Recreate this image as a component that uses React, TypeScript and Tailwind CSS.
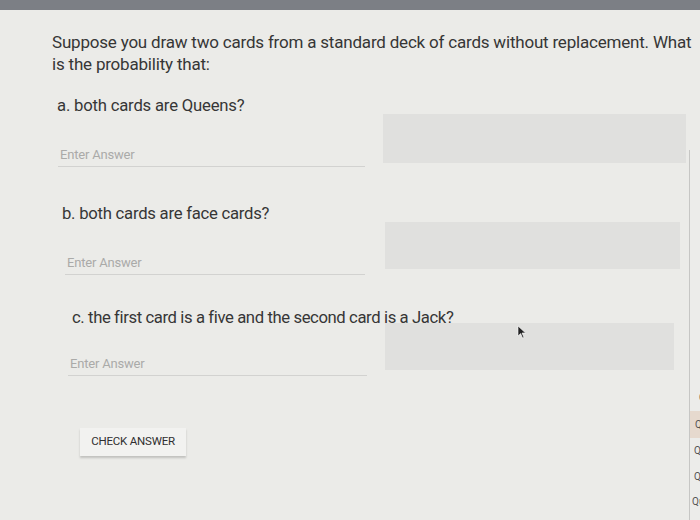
import React from 'react';

const parts = [
  { key: 'a', label: 'a. both cards are Queens?', labelPad: 'pl-[5px]', labelTrack: 'tracking-[-0.2px]', rowPad: 'pl-[6px]', rowTop: 'mt-0', inputW: 'w-[307px]', boxGap: 'ml-[18px]', boxW: 'w-[303px]', boxH: 'h-[49px]', top: 'mt-[23px]' },
  { key: 'b', label: 'b. both cards are face cards?', labelPad: 'pl-[10px]', labelTrack: 'tracking-[-0.25px]', rowPad: 'pl-[13px]', rowTop: 'mt-0', inputW: 'w-[300px]', boxGap: 'ml-[20px]', boxW: 'w-[295px]', boxH: 'h-[47px]', top: 'mt-[39px]' },
  { key: 'c', label: 'c. the first card is a five and the second card is a Jack?', labelPad: 'pl-[20px]', labelTrack: 'tracking-[-0.4px]', rowPad: 'pl-[16px]', rowTop: '-mt-[3px]', inputW: 'w-[299px]', boxGap: 'ml-[18px]', boxW: 'w-[289px]', boxH: 'h-[47px]', top: 'mt-[35px]' },
];

export default function App() {
  return (
    <div
      className="relative w-[700px] h-[520px] overflow-hidden bg-[#ebebe8] flex flex-col"
      style={{ fontFamily: 'Roboto, "Liberation Sans", sans-serif' }}
    >
      <div className="h-[10px] bg-[#7c7f85] shrink-0" />

      <div className="flex flex-1 min-h-0">
        {/* question column */}
        <div className="flex-1 min-w-0 pl-[52px] pt-[21px]">
          <p className="w-[646px] text-[17px] leading-[22px] tracking-[-0.2px] text-[#363636]">
            Suppose you draw two cards from a standard deck of cards without replacement. What is the probability that:
          </p>

          {parts.map((p) => (
            <div key={p.key} className={p.top}>
              <div className={`${p.labelPad} ${p.labelTrack} text-[16.7px] leading-[16px] text-[#363636]`}>{p.label}</div>
              <div className={`flex items-start ${p.rowPad} ${p.rowTop}`}>
                <div className={`${p.inputW} shrink-0 pt-[33px] pb-[3px] border-b border-[#d2d2d0]`}>
                  <div className="pl-[2px] text-[13px] leading-[16px] tracking-[-0.2px] text-[#aaaaa8]">Enter Answer</div>
                </div>
                <div className={`${p.boxGap} ${p.boxW} ${p.boxH} shrink-0 bg-[#e0e0de]`} />
              </div>
            </div>
          ))}

          <div className="mt-[52px] pl-[28px]">
            <button className="w-[106px] h-[28px] bg-[#f2f2f0] text-[11.5px] tracking-[-0.2px] text-[#2f2f2f] shadow-[0_2px_2px_rgba(0,0,0,0.18)]">
              CHECK ANSWER
            </button>
          </div>
        </div>

        {/* side nav, cut off at the right edge */}
        <div className="w-[11px] shrink-0 flex flex-col">
          <div className="h-[140px]" />
          <div className="flex-1 border-l border-[#c6c6c4] bg-[#ececea] pt-[235px] text-[10px] text-[#555] whitespace-nowrap overflow-hidden">
            <div className="h-[26px] leading-[26px] pl-[9px]">Question 1</div>
            <div className="h-[27px] leading-[27px] pl-[5px] bg-[#e6d9ce]">Question 2</div>
            <div className="h-[26px] leading-[26px] pl-[4px]">Question 3</div>
            <div className="h-[25px] leading-[25px] pl-[4px]">Question 4</div>
            <div className="h-[25px] leading-[25px] pl-[2px]">Question 5</div>
          </div>
        </div>
      </div>

      {/* mouse pointer */}
      <svg className="absolute left-[517px] top-[325px]" width="10" height="14" viewBox="0 0 10 14">
        <path d="M1 1 L1 11 L3.6 8.6 L5.6 13 L7 12.4 L5 8 L8.6 8 Z" fill="#222" stroke="#fff" strokeWidth="0.6" />
      </svg>
    </div>
  );
}
